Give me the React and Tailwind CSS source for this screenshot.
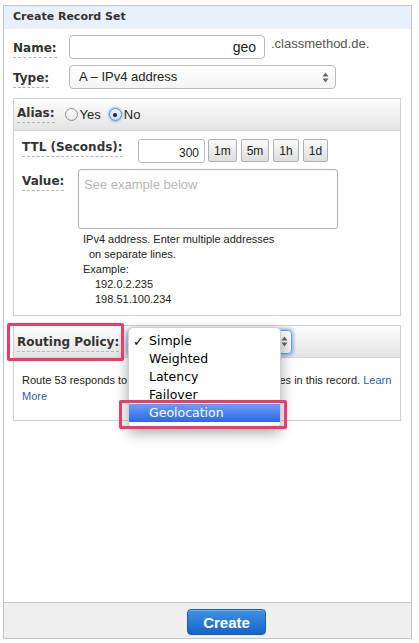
import React from "react";

const SANS = "font-['Liberation_Sans',Arial,sans-serif]";

const Label = ({ children }) => (
  <span className="inline-block font-['DejaVu_Sans',Verdana,sans-serif] font-bold text-[12px] leading-[15px] text-[#333] border-b border-dashed border-[#b5b5b5] pb-[1px]">
    {children}
  </span>
);

const Arrows = () => (
  <svg width="7" height="11" viewBox="0 0 7 11" className="shrink-0">
    <path d="M3.5 0.5 L6.5 4.5 L0.5 4.5 Z" fill="#666" />
    <path d="M3.5 10.5 L6.5 6.5 L0.5 6.5 Z" fill="#666" />
  </svg>
);

const Radio = ({ checked, label }) => (
  <span className="flex items-center gap-[2px] text-[13px] text-[#222]">
    {checked ? (
      <span className="w-[13px] h-[13px] rounded-full border border-[#5b8ed6] bg-gradient-to-b from-[#eaf3ff] to-[#c5dcf7] shadow-[0_0_2px_1px_rgba(90,150,230,0.55)] flex items-center justify-center">
        <span className="w-[4px] h-[4px] rounded-full bg-[#222]" />
      </span>
    ) : (
      <span className="w-[13px] h-[13px] rounded-full border border-[#8d8d8d] bg-gradient-to-b from-white to-[#e8e8e8]" />
    )}
    {label}
  </span>
);

const TimeButton = ({ children }) => (
  <button className="h-[23px] px-[5px] min-w-[25px] border border-[#b0b0b0] rounded-[2px] bg-gradient-to-b from-[#fafafa] to-[#dedede] text-[12px] text-[#222] leading-none">
    {children}
  </button>
);

const SectionHeader = ({ children }) => (
  <div className="h-[32px] bg-gradient-to-b from-[#fdfdfd] to-[#e4e4e4] border-b border-[#d2d2d2] pl-[3px] flex items-center">
    {children}
  </div>
);

export default function App() {
  const options = ["Simple", "Weighted", "Latency", "Failover"];

  return (
    <div className={`w-[419px] h-[643px] bg-white relative overflow-hidden ${SANS} text-[#222]`}>
      <div className="pt-[5px] pl-[3px]">
        <div className="w-[409px] h-[634px] border border-[#c4c4c4] flex flex-col">
          {/* Header */}
          <div className="h-[23px] bg-[#e8f0fc] pl-[9px] flex items-center font-['DejaVu_Sans',Verdana,sans-serif] font-bold text-[11px] text-[#333]">
            Create Record Set
          </div>

          <div className="flex-1 pl-[9px] pr-[10px] pt-[6px]">
            {/* Name */}
            <div className="flex items-center">
              <div className="w-[56px] flex pt-[4px]">
                <Label>Name:</Label>
              </div>
              <div className="w-[196px] h-[24px] border border-[#b9b9b9] rounded-[4px] bg-white flex items-center justify-end pr-[8px] text-[14px] text-[#222]">
                geo
              </div>
              <span className="self-start ml-[6px] text-[13px] text-[#555] leading-[18px]">.classmethod.de.</span>
            </div>

            {/* Type */}
            <div className="flex items-center mt-[6px]">
              <div className="w-[56px] flex pt-[4px]">
                <Label>Type:</Label>
              </div>
              <div className="w-[267px] h-[24px] border border-[#b9b9b9] rounded-[4px] bg-gradient-to-b from-white to-[#f4f4f4] flex items-center justify-between pl-[9px] pr-[6px] text-[13px] text-[#222]">
                A – IPv4 address
                <Arrows />
              </div>
            </div>

            {/* Alias box */}
            <div className="mt-[9px] border border-[#cfcfcf]">
              <SectionHeader>
                <Label>Alias:</Label>
                <div className="flex items-center gap-[8px] ml-[10px]">
                  <Radio label="Yes" />
                  <Radio checked label="No" />
                </div>
              </SectionHeader>

              <div className="pl-[8px] pt-[8px] pb-[8px]">
                {/* TTL */}
                <div className="flex items-start">
                  <div className="w-[116px] flex pt-[1px]">
                    <Label>TTL (Seconds):</Label>
                  </div>
                  <div className="w-[67px] h-[24px] border border-[#b9b9b9] rounded-[3px] bg-white flex items-end justify-end pr-[5px] pb-[3px] text-[12px] leading-none">
                    300
                  </div>
                  <div className="flex gap-[4px] ml-[3px]">
                    <TimeButton>1m</TimeButton>
                    <TimeButton>5m</TimeButton>
                    <TimeButton>1h</TimeButton>
                    <TimeButton>1d</TimeButton>
                  </div>
                </div>

                {/* Value */}
                <div className="flex items-start mt-[6px]">
                  <div className="w-[56px] flex pt-[5px]">
                    <Label>Value:</Label>
                  </div>
                  <div className="w-[260px] h-[60px] border border-[#b0b0b0] rounded-[3px] bg-white pl-[5px] pt-[8px] text-[13px] text-[#b5b5b5] leading-none">
                    See example below
                  </div>
                </div>

                <div className="ml-[61px] mt-[3px] text-[11px] leading-[15px] text-[#222]">
                  <div>IPv4 address. Enter multiple addresses</div>
                  <div className="pl-[6px]">on separate lines.</div>
                  <div>Example:</div>
                  <div className="pl-[12px]">192.0.2.235</div>
                  <div className="pl-[12px]">198.51.100.234</div>
                </div>
              </div>
            </div>

            {/* Routing Policy box */}
            <div className="mt-[9px] border border-[#cfcfcf]">
              <SectionHeader>
                <div className="w-[111px] flex pt-[3px]">
                  <Label>Routing Policy:</Label>
                </div>
                <div className="w-[164px] h-[24px] border border-[#6d9de0] rounded-[4px] bg-gradient-to-b from-white to-[#f0f0f0] shadow-[0_0_3px_2px_rgba(110,160,230,0.6)] flex items-center justify-end pr-[3px]">
                  <Arrows />
                </div>
              </SectionHeader>
              <div className="pl-[8px] pr-[6px] pt-[14px] pb-[16px] text-[11px] leading-[16px] text-[#222]">
                <div className="whitespace-nowrap">
                  Route 53 responds to queries based only on the values in this record.{" "}
                  <a className="text-[#1f5fa8]">Learn</a>
                </div>
                <a className="text-[#1f5fa8]">More</a>
              </div>
            </div>
          </div>

          {/* Footer */}
          <div className="h-[36px] border-t border-[#c2c2c2] bg-[#efefef] pl-[183px] pt-[6px]">
            <button className="w-[79px] h-[26px] rounded-[4px] border border-[#1b5fb0] bg-gradient-to-b from-[#3f93e6] to-[#1563c4] text-white font-bold text-[15px] leading-none shadow-[inset_0_1px_0_rgba(255,255,255,0.3)]">
              Create
            </button>
          </div>
        </div>
      </div>

      {/* Open dropdown menu */}
      <div className="absolute left-[128px] top-[327px] w-[153px] pt-[4px] pb-[5px] bg-white rounded-[5px] border border-[#d0d0d0] shadow-[0_5px_14px_rgba(0,0,0,0.35)] font-['DejaVu_Sans',sans-serif] text-[12.5px] text-black">
        {options.map((o, i) => (
          <div key={o} className="h-[18px] flex items-center">
            <span className="w-[20px] pl-[4px] text-[13px] leading-none">{i === 0 ? "✓" : ""}</span>
            {o}
          </div>
        ))}
        <div className="h-[18px] flex items-center pl-[20px] bg-gradient-to-b from-[#6a9cf6] to-[#2d66ea] text-white">
          Geolocation
        </div>
      </div>

      {/* Annotation boxes */}
      <div className="absolute left-[7px] top-[323px] w-[117px] h-[38px] border-[3px] border-[#f0386b] rounded-[2px]" />
      <div className="absolute left-[119px] top-[400px] w-[168px] h-[29px] border-[3px] border-[#f0386b] rounded-[2px]" />
    </div>
  );
}
